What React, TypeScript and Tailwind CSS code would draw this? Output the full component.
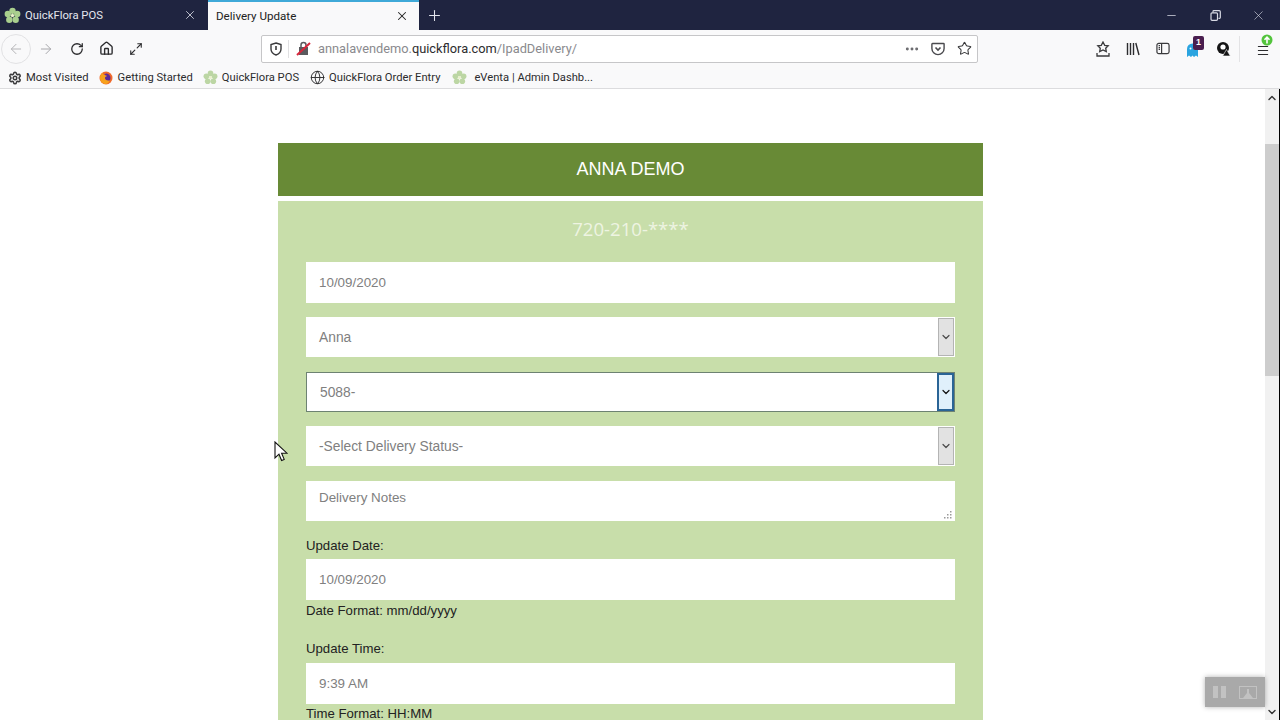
import { ArrowLeft, ArrowRight, RotateCw, Home, Maximize2, Plus, X, Minus, Star, MoreHorizontal, Globe, Settings, Menu, ChevronDown, ChevronUp } from "lucide-react";

const UI = "font-['Roboto','Noto_Sans',sans-serif]";
const FONT = "font-['Open_Sans','Noto_Sans',sans-serif]";
const ARIAL = "font-['Liberation_Sans',Arial,sans-serif]";

function Flower({ size = 16, color = "#a9cf8e" }: { size?: number; color?: string }) {
  return (
    <svg width={size} height={size} viewBox="0 0 16 16" className="shrink-0">
      <circle cx="8" cy="3.6" r="3" fill={color} />
      <circle cx="3.6" cy="6.6" r="3" fill={color} />
      <circle cx="12.4" cy="6.6" r="3" fill={color} />
      <circle cx="5" cy="12" r="3" fill={color} />
      <circle cx="11" cy="12" r="3" fill={color} />
      <circle cx="8" cy="8" r="1.6" fill="#e8f0c8" />
    </svg>
  );
}

function FirefoxLogo() {
  return (
    <svg width="14" height="14" viewBox="0 0 14 14" className="shrink-0">
      <circle cx="7" cy="7" r="6.5" fill="#f0692a" />
      <path d="M7 2.5a4.5 4.5 0 0 1 4.5 4.5c0 1.6-.9 3-2.2 3.8L5 9 3.5 5z" fill="#5b2a9a" />
      <path d="M1 7c0-2.6 1.2-4.6 3-5.6-.3 1-.1 1.7.5 2.2L8.2 5c-1.8.4-2.6 1.6-2 3 .6 1.3 2.4 1.8 4.6 1.2C9.800 11.700 8.500 13 7 13 3.700 13 1 10.300 1 7z" fill="#f7a11c" />
    </svg>
  );
}

function SelectBox({ label, focused }: { label: string; focused?: boolean }) {
  return (
    <div
      className={
        focused
          ? "flex h-[40px] items-stretch bg-white border border-[#6d8272] pl-[13px] pr-0"
          : "flex h-[40px] items-stretch bg-white py-[1px] pr-[1px] pl-[13px]"
      }
    >
      <div className="flex flex-1 items-center pt-[2px] text-[13.8px] text-[#808080]">{label}</div>
      <div
        className={
          focused
            ? "flex w-[17px] items-center justify-center border-2 border-[#2a6496] bg-[#e0f0fb] text-[#111]"
            : "flex w-[16px] items-center justify-center border border-[#b4b4b4] bg-[#e2e2e2] text-[#4a4a4a]"
        }
      >
        <ChevronDown size={12} strokeWidth={2.4} />
      </div>
    </div>
  );
}

function TextBox({ value }: { value: string }) {
  return <div className="flex h-[41px] items-center bg-white pl-[13px] pt-[1px] text-[13.4px] text-[#808080]">{value}</div>;
}

export default function App() {
  return (
    <div className={`relative flex h-[720px] w-[1280px] flex-col overflow-hidden bg-white ${ARIAL}`}>
      {/* window title bar */}
      <div className={`flex h-[30px] shrink-0 items-stretch bg-[#1f2440] ${UI}`}>
        <div className="flex w-[208px] items-center pl-[4px] pr-[11px] text-[#e4e6ee]">
          <Flower size={17} />
          <span className="ml-[4px] flex-1 pt-[2px] text-[11.3px]">QuickFlora POS</span>
          <X size={14} strokeWidth={1.6} className="text-[#c6c9d6]" />
        </div>
        <div className="flex w-[211px] items-center border-t-2 border-[#3fa9d8] bg-[#f9f9fa] pl-[8px] pr-[10px] text-[#222]">
          <span className="flex-1 pt-[1px] text-[11.6px]">Delivery Update</span>
          <X size={14} strokeWidth={1.8} />
        </div>
        <div className="flex w-[30px] items-center justify-center text-[#e4e6ee]">
          <Plus size={17} strokeWidth={1.5} />
        </div>
        <div className="flex-1" />
        <div className="flex items-center text-[#d8dae4]">
          <div className="flex w-[44px] justify-center"><Minus size={13} strokeWidth={1.4} /></div>
          <div className="flex w-[44px] justify-center">
            <svg width="11" height="11" viewBox="0 0 11 11" fill="none" stroke="currentColor" strokeWidth="1.2">
              <rect x="1" y="2.800" width="6.500" height="7.500" rx="1" />
              <path d="M3 2.500V1.500a.8.8 0 0 1 .8-.8h5.500a1 1 0 0 1 1 1v5.800a.8.8 0 0 1-.8.8h-1" />
            </svg>
          </div>
          <div className="flex w-[43px] justify-center"><X size={15} strokeWidth={1} /></div>
        </div>
      </div>

      {/* nav bar */}
      <div className="flex h-[37px] shrink-0 items-center bg-[#f9f9fa] text-[#2c2c2e]">
        <div className="ml-[1px] flex h-[30px] w-[30px] items-center justify-center rounded-full border border-[#e2e2e4] text-[#b5b5b8]">
          <ArrowLeft size={16} strokeWidth={1.5} />
        </div>
        <div className="flex w-[30px] justify-center text-[#a8a8ac]"><ArrowRight size={16} strokeWidth={1.5} /></div>
        <div className="flex w-[31px] justify-center"><RotateCw size={14} strokeWidth={2.2} /></div>
        <div className="flex w-[29px] justify-center"><Home size={15} strokeWidth={2.2} /></div>
        <div className="flex w-[30px] justify-center"><Maximize2 size={14} strokeWidth={1.9} /></div>
        <div className={`ml-[110px] flex h-[28px] w-[717px] items-center rounded-[2px] border border-[#c6c6c8] bg-white text-[12.8px] ${UI}`}>
          <div className="flex w-[20px] justify-end">
            <svg width="12" height="14" viewBox="0 0 12 14" fill="none" stroke="#3a3a3c" strokeWidth="1.400">
              <path d="M6 1 11 2.500V7c0 3-2.200 5-5 6-2.800-1-5-3-5-6V2.500z" />
              <path d="M6 4v4" strokeWidth="1.600" />
            </svg>
          </div>
          <div className="ml-[6px] mr-[7px] h-[18px] w-px bg-[#e0e0e2]" />
          <svg width="15" height="15" viewBox="0 0 15 15" className="shrink-0">
            <path d="M3 6h9v8H3z" fill="#5a5a5e" />
            <path d="M5 6V4a2.500 2.500 0 0 1 5 0v2" fill="none" stroke="#5a5a5e" strokeWidth="1.500" />
            <path d="M1 14 14 2" stroke="#d8263c" strokeWidth="2" />
          </svg>
          <span className="ml-[7px] text-[#8a8a8e]">
            annalavendemo.<span className="text-[#2c2c2e]">quickflora.com</span>/IpadDelivery/
          </span>
          <div className="flex-1" />
          <MoreHorizontal size={16} strokeWidth={2.4} className="mr-[11px] text-[#6a6a6e]" />
          <svg width="14" height="14" viewBox="0 0 14 14" fill="none" stroke="#4a4a4e" strokeWidth="1.400" className="mr-[12px]">
            <path d="M1.500 1.500h11a.6.6 0 0 1 .6.6v4.400a6.100 6.100 0 0 1-12.200 0V2.100a.6.6 0 0 1 .6-.6z" />
            <path d="m4.500 5.500 2.500 2.500 2.500-2.500" strokeWidth="1.600" />
          </svg>
          <Star size={15} strokeWidth={1.7} className="mr-[5px] text-[#3a3a3c]" />
        </div>
        <div className="ml-[118px] flex w-[14px] justify-center">
          <svg width="14" height="16" viewBox="0 0 14 16" fill="none" stroke="#3a3a3c" strokeWidth="1.300">
            <path d="m7 1 1.700 3.300 3.500.5-2.500 2.400.6 3.400L7 9l-3.300 1.600.6-3.400L1.800 4.800l3.500-.5z" />
            <path d="M1 12v3h12v-3" />
          </svg>
        </div>
        <div className="ml-[16px] flex w-[14px] justify-center">
          <svg width="14" height="14" viewBox="0 0 14 14" fill="none" stroke="#2c2c2e" strokeWidth="1.400">
            <path d="M1.500 1v12M4.500 1v12M7.500 1v12M9.800 1l3.200 12" />
          </svg>
        </div>
        <div className="ml-[16px] flex w-[14px] justify-center">
          <svg width="15" height="13" viewBox="0 0 15 13" fill="none" stroke="#3a3a3c" strokeWidth="1.300">
            <rect x="1" y="1" width="13" height="11" rx="2" />
            <path d="M6 1v11" />
            <path d="M2.800 3.500h1.500M2.800 5.500h1.500M2.800 7.500h1.500" />
          </svg>
        </div>
        <div className="relative ml-[15px] flex w-[14px] justify-center">
          <svg width="13" height="16" viewBox="0 0 13 16" className="mt-[3px]">
            <path d="M1 7a5.500 5.500 0 0 1 11 0v8l-2-1.500L8 15l-1.500-1.500L5 15l-2-1.500L1 15z" fill="#2aa4e0" />
            <circle cx="4.500" cy="6.500" r="1" fill="#fff" />
            <circle cx="8.500" cy="6.500" r="1" fill="#fff" />
          </svg>
          <div className={`absolute -top-[3px] left-[8px] flex h-[14px] w-[11px] items-center justify-center rounded-[2px] bg-[#4a1f4f] text-[9px] font-bold text-white ${ARIAL}`}>1</div>
        </div>
        <div className="ml-[16px] flex w-[16px] justify-center">
          <svg width="15" height="16" viewBox="0 0 15 16">
            <circle cx="7" cy="7" r="6" fill="#151515" />
            <circle cx="7" cy="6" r="2.600" fill="#fff" />
            <path d="m10.500 8.500 3.800 6.500H6.700z" fill="#151515" stroke="#fff" strokeWidth=".6" />
          </svg>
        </div>
        <div className="ml-[8px] h-[26px] w-px bg-[#e3e3e5]" />
        <div className="relative ml-[16px] flex w-[14px] justify-center">
          <Menu size={15} strokeWidth={1.8} className="mt-[4px]" />
          <svg width="12" height="12" viewBox="0 0 12 12" className="absolute -top-[5px] left-[5px]">
            <circle cx="6" cy="6" r="5.500" fill="#53c43c" />
            <path d="M6 9.500V3.500M3.500 5.800 6 3.200l2.500 2.600" stroke="#fff" strokeWidth="1.600" fill="none" />
          </svg>
        </div>
      </div>

      {/* bookmarks bar */}
      <div className={`flex h-[22px] shrink-0 items-center border-b border-[#dcdcde] bg-[#f9f9fa] pl-[8px] text-[11.2px] text-[#2c2c2e] ${UI}`}>
        <Settings size={14} strokeWidth={2.6} className="text-[#3a3a3c]" />
        <span className="ml-[4px] pt-[1px]">Most Visited</span>
        <div className="ml-[10px]"><FirefoxLogo /></div>
        <span className="ml-[5px] pt-[1px]">Getting Started</span>
        <div className="ml-[10px]"><Flower size={15} color="#bcd6a4" /></div>
        <span className="ml-[4px] pt-[1px]">QuickFlora POS</span>
        <Globe size={15} strokeWidth={1.5} className="ml-[11px]" />
        <span className="ml-[4px] pt-[1px]">QuickFlora Order Entry</span>
        <div className="ml-[12px]"><Flower size={15} color="#bcd6a4" /></div>
        <span className="ml-[7px] pt-[1px]">eVenta | Admin Dashb...</span>
      </div>

      {/* page */}
      <div className="flex min-h-0 flex-1">
        <div className="min-w-0 flex-1 overflow-hidden pl-[278px] pt-[54px]">
          <div className="w-[705px]">
            <div className="flex h-[53px] items-center justify-center bg-[#688a36] text-[18px] text-white">ANNA DEMO</div>
            <div className="mt-[5px] bg-[#c8deaa] px-[28px] pt-[15px] pb-[40px]">
              <div className={`h-[46px] pt-[1px] text-center text-[18.6px] leading-[24px] text-[#eef4e2] ${FONT}`}>720-210-****</div>
              <TextBox value="10/09/2020" />
              <div className="mt-[14px]"><SelectBox label="Anna" /></div>
              <div className="mt-[15px]"><SelectBox label="5088-" focused /></div>
              <div className="mt-[14px]"><SelectBox label="-Select Delivery Status-" /></div>
              <div className="relative mt-[15px] h-[40px] bg-white pl-[13px] pt-[7px] text-[13.4px] leading-[20px] text-[#808080]">
                Delivery Notes
                <svg width="8" height="8" viewBox="0 0 8 8" className="absolute bottom-[2px] right-[3px]" fill="#9a9a9a">
                  <rect x="6" y="0" width="1.500" height="1.500" />
                  <rect x="3" y="3" width="1.500" height="1.500" />
                  <rect x="6" y="3" width="1.500" height="1.500" />
                  <rect x="0" y="6" width="1.500" height="1.500" />
                  <rect x="3" y="6" width="1.500" height="1.500" />
                  <rect x="6" y="6" width="1.500" height="1.500" />
                </svg>
              </div>
              <div className="mt-[14px] h-[24px] pt-[1px] text-[13.2px] leading-[20px] text-[#222]">Update Date:</div>
              <TextBox value="10/09/2020" />
              <div className="h-[20px] pt-[1px] text-[13.2px] leading-[20px] text-[#222]">Date Format: mm/dd/yyyy</div>
              <div className="mt-[19px] h-[24px] text-[13.2px] leading-[20px] text-[#222]">Update Time:</div>
              <TextBox value="9:39 AM" />
              <div className="h-[20px] text-[13.2px] leading-[20px] text-[#222]">Time Format: HH:MM</div>
            </div>
          </div>
        </div>
        {/* scrollbar */}
        <div className="flex w-[14px] shrink-0 flex-col bg-[#f1f1f1]">
          <div className="flex h-[17px] items-center justify-center text-[#333]"><ChevronUp size={12} strokeWidth={2.8} /></div>
          <div className="mt-[38px] h-[232px] bg-[#cdcdcd]" />
          <div className="flex-1" />
          <div className="flex h-[17px] items-center justify-center text-[#333]"><ChevronDown size={12} strokeWidth={2.8} /></div>
        </div>
        <div className="w-px shrink-0 bg-black" />
      </div>

      {/* mouse cursor */}
      <svg width="14" height="21" viewBox="0 0 14 21" className="absolute left-[274px] top-[441px]">
        <path d="M1 1v16l4-3.800 2.600 6.300 2.600-1.100-2.600-6.200H13z" fill="#fff" stroke="#111" strokeWidth="1.100" />
      </svg>

      {/* recorder overlay */}
      <div className="absolute left-[1205px] top-[677px] flex h-[30px] w-[60px] items-center justify-center gap-[13px] bg-[#a9a9a9] shadow-[0_0_5px_rgba(0,0,0,0.3)]">
        <div className="flex gap-[3px]">
          <div className="h-[12px] w-[5px] bg-[#c2c2c2]" />
          <div className="h-[12px] w-[5px] bg-[#c2c2c2]" />
        </div>
        <svg width="18" height="13" viewBox="0 0 18 13" fill="none">
          <rect x=".5" y=".5" width="17" height="12" stroke="#c2c2c2" />
          <path d="M8 3h2v4l4 5H4l4-5z" fill="#c2c2c2" />
        </svg>
      </div>
    </div>
  );
}
